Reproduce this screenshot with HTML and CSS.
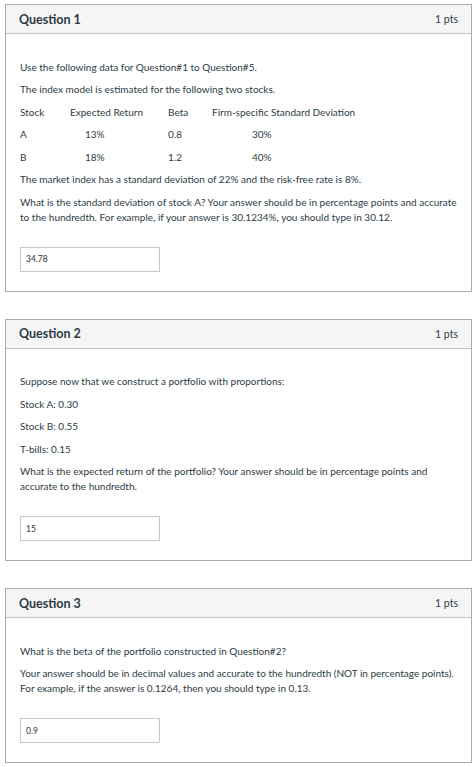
FILE: index.html
```html
<!DOCTYPE html>
<html lang="en">
<head>
  <meta charset="UTF-8">
  <meta name="viewport" content="width=device-width, initial-scale=1.0">
  <title>Quiz</title>
  <link rel="stylesheet" href="styles.css">
</head>
<body>
  <div class="quiz">
    <div class="question">
      <div class="question-header">
        <h2>Question 1</h2>
        <span class="points">1 pts</span>
      </div>
      <div class="question-body">
        <p>Use the following data for Question#1 to Question#5.</p>
        <p>The index model is estimated for the following two stocks.</p>
        <div class="data-row">
          <span>Stock</span>
          <span>Expected Return</span>
          <span>Beta</span>
          <span>Firm-specific Standard Deviation</span>
        </div>
        <div class="data-row">
          <span>A</span>
          <span class="ret">13%</span>
          <span>0.8</span>
          <span class="sd">30%</span>
        </div>
        <div class="data-row">
          <span>B</span>
          <span class="ret">18%</span>
          <span>1.2</span>
          <span class="sd">40%</span>
        </div>
        <p>The market index has a standard deviation of 22% and the risk-free rate is 8%.</p>
        <p>What is the standard deviation of stock A? Your answer should be in percentage points and accurate to the hundredth. For example, if your answer is 30.1234%, you should type in 30.12.</p>
        <div class="answer">
          <input type="text" value="34.78">
        </div>
      </div>
    </div>

    <div class="question">
      <div class="question-header">
        <h2>Question 2</h2>
        <span class="points">1 pts</span>
      </div>
      <div class="question-body">
        <p>Suppose now that we construct a portfolio with proportions:</p>
        <p>Stock A: 0.30</p>
        <p>Stock B: 0.55</p>
        <p>T-bills: 0.15</p>
        <p>What is the expected return of the portfolio? Your answer should be in percentage points and accurate to the hundredth.</p>
        <div class="answer">
          <input type="text" value="15">
        </div>
      </div>
    </div>

    <div class="question">
      <div class="question-header">
        <h2>Question 3</h2>
        <span class="points">1 pts</span>
      </div>
      <div class="question-body">
        <p>What is the beta of the portfolio constructed in Question#2?</p>
        <p>Your answer should be in decimal values and accurate to the hundredth (NOT in percentage points). For example, if the answer is 0.1264, then you should type in 0.13.</p>
        <div class="answer">
          <input type="text" value="0.9">
        </div>
      </div>
    </div>
  </div>
</body>
</html>
```

FILE: styles.css
```css
body {
  margin: 0;
  font-family: Lato, "Open Sans", sans-serif;
  color: #2d3b45;
  background: #fff;
}
.quiz {
  padding: 4px 2px 0 5px;
}
.question {
  border: 1px solid #aaaaaa;
  margin-bottom: 27px;
}
.question-header {
  display: flex;
  justify-content: space-between;
  align-items: center;
  height: 28px;
  padding: 0 13px;
  background-color: #f5f5f5;
  border-bottom: 1px solid #c4c4c4;
}
.question-header h2 {
  margin: 0;
  font-size: 12.5px;
  font-weight: 700;
}
.points {
  font-size: 10.5px;
  color: #2d3b45;
}
.question-body {
  padding: 18px 14px 19px;
  font-size: 10px;
  line-height: 15px;
}
.question-body p {
  margin: 7.5px 0;
}
.data-row {
  display: grid;
  grid-template-columns: 50px 98px 44px auto;
  margin: 7.5px 0;
}
.data-row .ret {
  padding-left: 15px;
}
.data-row .sd {
  padding-left: 40px;
}
.answer {
  margin-top: 22px;
}
.answer input {
  width: 140px;
  height: 25px;
  box-sizing: border-box;
  padding: 0 5px;
  border: 1px solid #c7c7c7;
  font-family: Lato, sans-serif;
  font-size: 8.5px;
  color: #333;
}
```
